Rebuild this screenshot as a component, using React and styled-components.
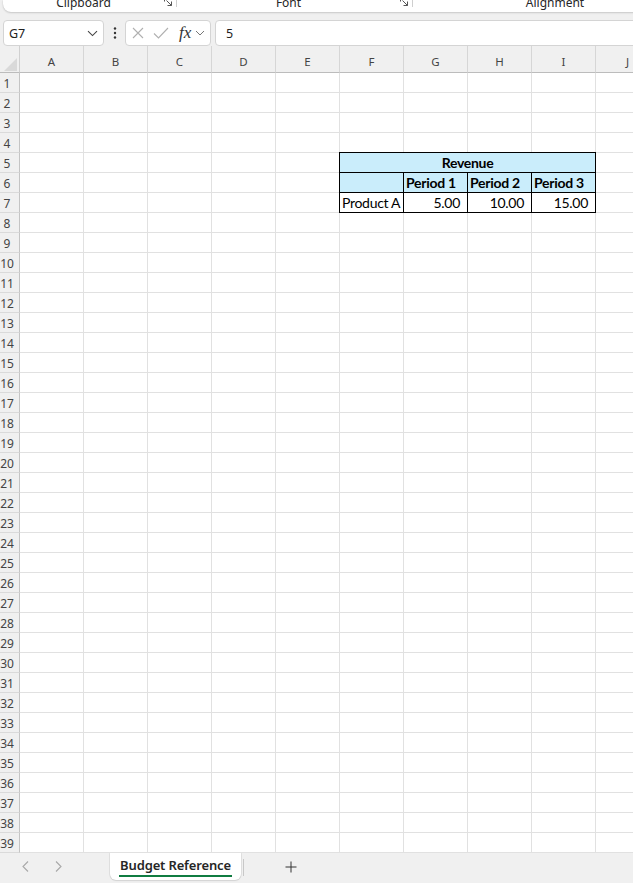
import React from 'react';
import styled, { createGlobalStyle } from 'styled-components';

const GlobalStyle = createGlobalStyle`
  html, body { margin: 0; padding: 0; background: #f0f0f0; }
  body { overflow: hidden; }
  * { box-sizing: border-box; }
`;

const UI_FONT = '"Noto Sans", "Open Sans", sans-serif';
const CELL_FONT = 'Lato, "Liberation Sans", sans-serif';
const BLUE = '#caedfb';
const GRID = '#e1e1e1';

const Window = styled.div`
  width: 633px;
  height: 883px;
  overflow: hidden;
  display: flex;
  flex-direction: column;
  background: #f0f0f0;
  font-family: ${UI_FONT};
  color: #222;
`;

/* ---------- Ribbon (clipped) ---------- */
const RibbonStrip = styled.div`
  height: 12px;
  padding-left: 3px;
  flex-shrink: 0;
`;

const RibbonPanel = styled.div`
  width: 800px;
  height: 12px;
  background: #fff;
  border-radius: 0 0 8px 8px;
  box-shadow: 0 1px 2px rgba(0, 0, 0, 0.16), 0 0 1px rgba(0, 0, 0, 0.12);
  display: flex;
  overflow: hidden;
`;

const RibbonGroup = styled.div`
  width: ${(p) => p.$w}px;
  flex-shrink: 0;
  display: flex;
  align-items: flex-start;
`;

const GroupLabel = styled.div`
  flex: 1;
  text-align: center;
  font-size: 12px;
  line-height: 12px;
  margin-top: -3px;
  color: #262626;
  white-space: nowrap;
`;

const LauncherIcon = styled.svg`
  width: 9px;
  height: 9px;
  margin-top: -2px;
  margin-right: ${(p) => p.$mr}px;
  flex-shrink: 0;
`;

const GroupDivider = styled.div`
  width: 1px;
  height: 7px;
  background: #cfcfcf;
  flex-shrink: 0;
`;

const Launcher = ({ mr }) => (
  <LauncherIcon $mr={mr} viewBox="0 0 9 9">
    <path
      d="M0.5 0.5H3.5M0.5 0.5V3.5M2.5 2.5L7.5 7.5M7.5 3.5V7.5H3.5"
      stroke="#555"
      strokeWidth="1"
      fill="none"
    />
  </LauncherIcon>
);

/* ---------- Formula bar ---------- */
const FormulaBar = styled.div`
  display: flex;
  align-items: stretch;
  height: 26px;
  margin-top: 8px;
  padding-left: 3px;
  flex-shrink: 0;
`;

const FieldBox = styled.div`
  background: #fff;
  border: 1px solid #d4d4d4;
  border-radius: 4px;
  display: flex;
  align-items: center;
  flex-shrink: 0;
`;

const NameBox = styled(FieldBox)`
  width: 101px;
  padding: 0 5px 0 5px;
  justify-content: space-between;
`;

const NameText = styled.span`
  font-size: 12.5px;
  color: #222;
  padding-top: 1px;
`;

const DotsSlot = styled.div`
  width: 21px;
  display: flex;
  align-items: center;
  justify-content: center;
  flex-shrink: 0;
`;

const FxBox = styled(FieldBox)`
  width: 86px;
  padding-left: 6px;
`;

const FxText = styled.span`
  font-family: "Liberation Serif", "DejaVu Serif", serif;
  font-style: italic;
  font-size: 17px;
  color: #333;
  margin-left: 10px;
  line-height: 1;
  padding-bottom: 1px;
`;

const FormulaInput = styled(FieldBox)`
  flex: 1;
  margin-left: 4px;
  margin-right: -12px;
  padding-left: 10px;
  font-size: 12.5px;
  color: #222;
`;

const Icon = styled.svg`
  flex-shrink: 0;
  margin-left: ${(p) => p.$ml || 0}px;
  display: block;
`;

/* ---------- Sheet grid ---------- */
const Sheet = styled.div`
  display: grid;
  grid-template-columns: 20px repeat(10, 64px);
  grid-template-rows: 27px repeat(39, 20px);
  flex-shrink: 0;
  background: #fff;
`;

const Corner = styled.div`
  background: #f0f0f0;
  border-right: 1px solid #d0d0d0;
  border-bottom: 1px solid #bcbcbc;
  display: flex;
  align-items: flex-end;
  justify-content: flex-end;
  padding: 0 2px 1px 0;
`;

const ColHeader = styled.div`
  background: #f0f0f0;
  border-right: 1px solid #d6d6d6;
  border-bottom: 1px solid #bcbcbc;
  text-align: center;
  font-size: 11.5px;
  line-height: 20px;
  padding-top: 6px;
  color: #444;
`;

const RowHeader = styled.div`
  background: #f0f0f0;
  border-right: 1px solid #c4c4c4;
  border-bottom: 1px solid #dadada;
  display: flex;
  justify-content: center;
  padding: 1px 5px 0 0;
  font-size: 12px;
  line-height: 19px;
  color: #444;
  overflow: visible;
  white-space: nowrap;
`;

const Cell = styled.div`
  grid-column: span ${(p) => p.$span || 1};
  background: ${(p) => p.$fill || '#fff'};
  border-right: 1px solid ${(p) => (p.$boxed ? '#000' : GRID)};
  border-bottom: 1px solid ${(p) => (p.$boxed ? '#000' : GRID)};
  box-shadow: ${(p) =>
    p.$boxed ? '-1px -1px 0 0 #000, 0 -1px 0 0 #000, -1px 0 0 0 #000' : 'none'};
  display: flex;
  align-items: flex-end;
  justify-content: ${(p) =>
    p.$align === 'right' ? 'flex-end' : p.$align === 'center' ? 'center' : 'flex-start'};
  padding: 0 ${(p) => (p.$align === 'right' ? 7 : 2)}px 1px 2px;
  font-family: ${CELL_FONT};
  font-size: 14px;
  letter-spacing: -0.3px;
  font-weight: ${(p) => (p.$bold ? 700 : 400)};
  line-height: 17px;
  color: #000;
  white-space: nowrap;
  overflow: hidden;
`;

/* ---------- Tab bar ---------- */
const TabBar = styled.div`
  flex: 1;
  display: flex;
  align-items: flex-start;
  background: #f0f0f0;
`;

const NavButton = styled.div`
  width: 33px;
  height: 27px;
  display: flex;
  align-items: center;
  justify-content: center;
  flex-shrink: 0;
`;

const NavGroup = styled.div`
  display: flex;
  padding-left: 9px;
  width: 110px;
  flex-shrink: 0;
`;

const SheetTab = styled.div`
  width: 131px;
  height: 27px;
  background: #fff;
  border-radius: 0 0 6px 6px;
  box-shadow: 0 1px 1px rgba(0, 0, 0, 0.12), 1px 0 0 rgba(0, 0, 0, 0.06), -1px 0 0 rgba(0, 0, 0, 0.06);
  display: flex;
  flex-direction: column;
  align-items: center;
  padding-top: 4px;
  flex-shrink: 0;
`;

const TabLabel = styled.span`
  font-size: 13px;
  font-weight: 600;
  line-height: 16px;
  color: #262626;
  letter-spacing: -0.15px;
  white-space: nowrap;
`;

const TabUnderline = styled.div`
  width: 113px;
  height: 2px;
  margin-top: 2px;
  background: #107c41;
`;

const TabSeparator = styled.div`
  width: 1px;
  height: 17px;
  margin: 6px 0 0 2px;
  background: #c8c8c8;
  flex-shrink: 0;
`;

const AddButton = styled.div`
  width: 24px;
  height: 27px;
  margin-left: 35px;
  display: flex;
  align-items: center;
  justify-content: center;
  flex-shrink: 0;
`;

/* ---------- Data ---------- */
const COLS = ['A', 'B', 'C', 'D', 'E', 'F', 'G', 'H', 'I', 'J'];

const DATA = {
  '5F': { text: 'Revenue', span: 4, bold: true, align: 'center', fill: BLUE, boxed: true },
  '6F': { text: '', fill: BLUE, boxed: true },
  '6G': { text: 'Period 1', bold: true, fill: BLUE, boxed: true },
  '6H': { text: 'Period 2', bold: true, fill: BLUE, boxed: true },
  '6I': { text: 'Period 3', bold: true, fill: BLUE, boxed: true },
  '7F': { text: 'Product A', boxed: true },
  '7G': { text: '5.00', align: 'right', boxed: true },
  '7H': { text: '10.00', align: 'right', boxed: true },
  '7I': { text: '15.00', align: 'right', boxed: true },
};

const COVERED = new Set(['5G', '5H', '5I']);

const rows = Array.from({ length: 39 }, (_, i) => i + 1);

export default function App() {
  return (
    <>
      <GlobalStyle />
      <Window>
        <RibbonStrip>
          <RibbonPanel>
            <RibbonGroup $w={174}>
              <GroupLabel>Clipboard</GroupLabel>
              <Launcher mr={3} />
              <GroupDivider />
            </RibbonGroup>
            <RibbonGroup $w={236}>
              <GroupLabel>Font</GroupLabel>
              <Launcher mr={3} />
              <GroupDivider />
            </RibbonGroup>
            <RibbonGroup $w={284}>
              <GroupLabel>Alignment</GroupLabel>
            </RibbonGroup>
          </RibbonPanel>
        </RibbonStrip>

        <FormulaBar>
          <NameBox>
            <NameText>G7</NameText>
            <Icon width="11" height="7" viewBox="0 0 11 7">
              <path d="M1 1.2L5.5 5.6L10 1.2" stroke="#444" strokeWidth="1.1" fill="none" />
            </Icon>
          </NameBox>
          <DotsSlot>
            <Icon width="4" height="12" viewBox="0 0 4 12">
              <circle cx="2" cy="1.5" r="1.2" fill="#333" />
              <circle cx="2" cy="6" r="1.2" fill="#333" />
              <circle cx="2" cy="10.5" r="1.2" fill="#333" />
            </Icon>
          </DotsSlot>
          <FxBox>
            <Icon width="12" height="12" viewBox="0 0 12 12">
              <path d="M1 1L11 11M11 1L1 11" stroke="#b0b0b0" strokeWidth="1.1" fill="none" />
            </Icon>
            <Icon $ml={9} width="16" height="12" viewBox="0 0 16 12">
              <path d="M1 6.5L5.5 11L15 1" stroke="#b0b0b0" strokeWidth="1.1" fill="none" />
            </Icon>
            <FxText>fx</FxText>
            <Icon $ml={4} width="10" height="6" viewBox="0 0 10 6">
              <path d="M1 1L5 5L9 1" stroke="#777" strokeWidth="1" fill="none" />
            </Icon>
          </FxBox>
          <FormulaInput>5</FormulaInput>
        </FormulaBar>

        <Sheet>
          <Corner>
            <Icon width="13" height="13" viewBox="0 0 13 13">
              <path d="M13 0V13H0Z" fill="#d9d9d9" />
            </Icon>
          </Corner>
          {COLS.map((c) => (
            <ColHeader key={c}>{c}</ColHeader>
          ))}
          {rows.map((r) => (
            <React.Fragment key={r}>
              <RowHeader>{r}</RowHeader>
              {COLS.map((c) => {
                const key = `${r}${c}`;
                if (COVERED.has(key)) return null;
                const d = DATA[key];
                if (!d) return <Cell key={key} />;
                return (
                  <Cell
                    key={key}
                    $span={d.span}
                    $bold={d.bold}
                    $align={d.align}
                    $fill={d.fill}
                    $boxed={d.boxed}
                  >
                    {d.text}
                  </Cell>
                );
              })}
            </React.Fragment>
          ))}
        </Sheet>

        <TabBar>
          <NavGroup>
            <NavButton>
              <Icon width="7" height="11" viewBox="0 0 7 11">
                <path d="M6 0.5L1 5.5L6 10.5" stroke="#a8a8a8" strokeWidth="1.1" fill="none" />
              </Icon>
            </NavButton>
            <NavButton>
              <Icon width="7" height="11" viewBox="0 0 7 11">
                <path d="M1 0.5L6 5.5L1 10.5" stroke="#a8a8a8" strokeWidth="1.1" fill="none" />
              </Icon>
            </NavButton>
          </NavGroup>
          <SheetTab>
            <TabLabel>Budget Reference</TabLabel>
            <TabUnderline />
          </SheetTab>
          <TabSeparator />
          <AddButton>
            <Icon width="12" height="12" viewBox="0 0 12 12">
              <path d="M6 0.5V11.5M0.5 6H11.5" stroke="#333" strokeWidth="1" fill="none" />
            </Icon>
          </AddButton>
        </TabBar>
      </Window>
    </>
  );
}
